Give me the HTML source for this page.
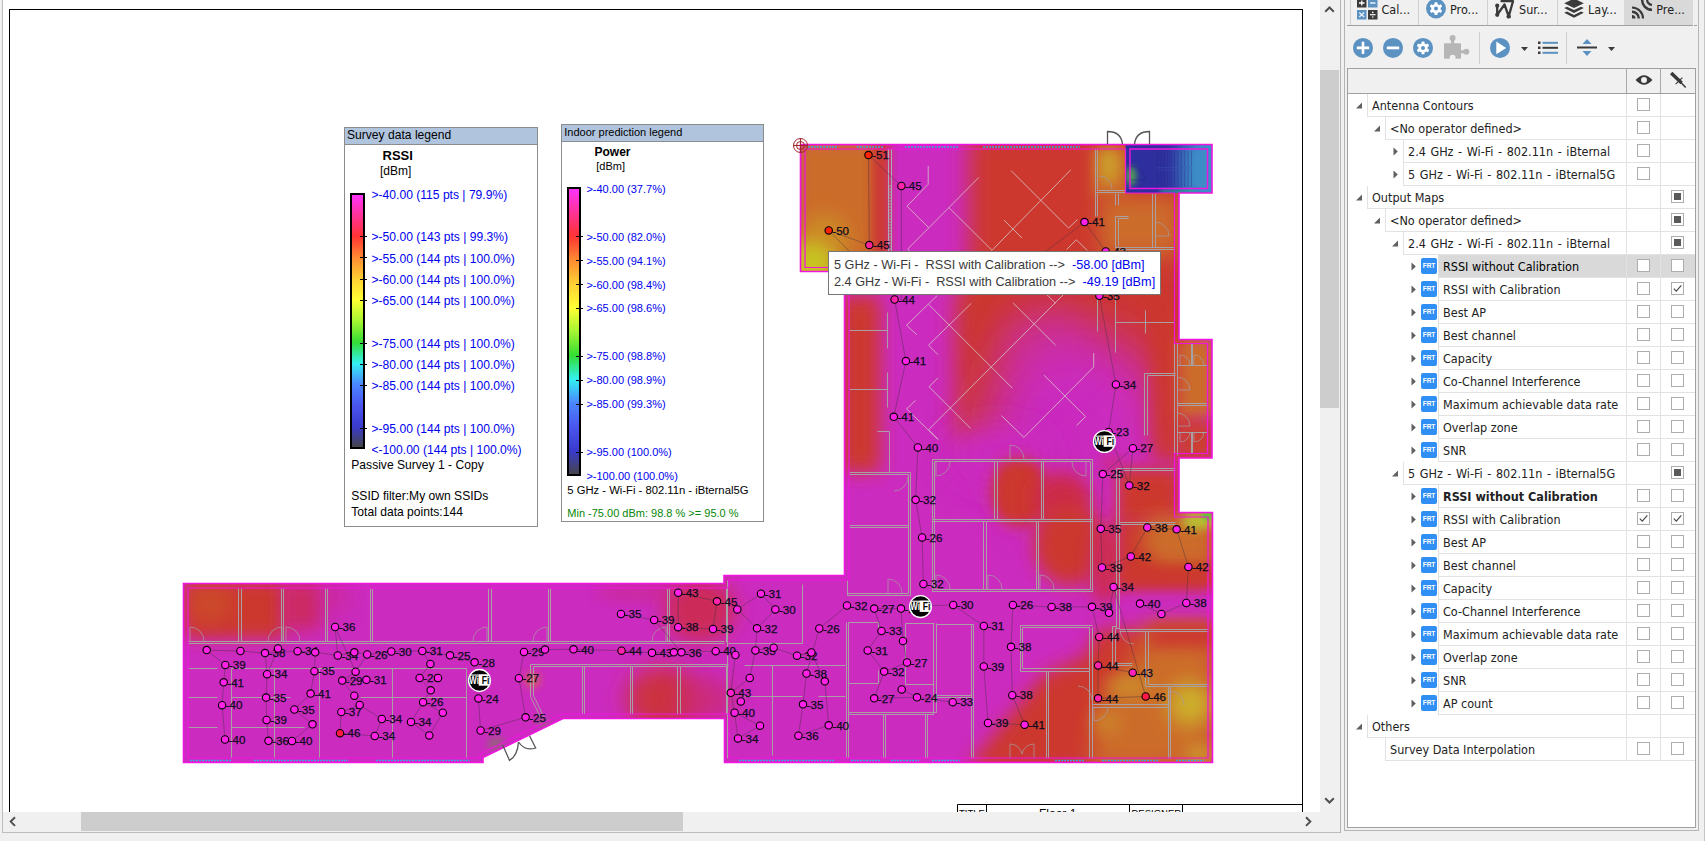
<!DOCTYPE html>
<html lang="en"><head><meta charset="utf-8"><title>Survey map</title>
<style>
html,body{margin:0;padding:0}
body{width:1705px;height:841px;overflow:hidden;background:#f0f0f0;position:relative;font-family:"DejaVu Sans Condensed","Liberation Sans","DejaVu Sans",sans-serif;font-size:12.5px;color:#202020}
.abs{position:absolute}
#canvas{position:absolute;left:3px;top:0;width:1317px;height:812px;background:#fff;overflow:hidden}
.tree{position:absolute;left:1347px;top:68px;width:349px;height:760px;border:1px solid #a0a0a0;box-sizing:border-box;background:#fff;overflow:hidden}
.th{position:absolute;left:0;top:0;width:347px;height:24px;background:#f0f0f0;border-bottom:1px solid #a0a0a0}
.row{position:absolute;left:0;width:347px;height:23px}
.cell{position:absolute;top:0;height:22px;border-left:1px solid #e2e2e2;border-bottom:1px solid #e2e2e2}
.txt{position:absolute;top:1px;line-height:22px;white-space:pre;color:#222}
.cb{position:absolute;top:4px;width:11px;height:11px;border:1px solid #adadad;background:#fff}
.frt{position:absolute;top:3px;width:16px;height:16px;background:#2f8ff5;border-radius:2px;color:#fff;font-family:"Liberation Sans",sans-serif;font-weight:bold;font-size:6.5px;line-height:15px;text-align:center;letter-spacing:0}
.tab{position:absolute;top:0;height:25px;line-height:20px;white-space:pre;color:#222}
</style></head><body>
<div id="canvas"></div>
<div class="abs" style="left:0;top:0;width:1320px;height:812px;overflow:hidden">
<svg id="map" width="1320" height="812" viewBox="0 0 1320 812" style="position:absolute;left:0;top:0">
<defs><linearGradient id="cbar" x1="0" y1="0" x2="0" y2="1">
<stop offset="0" stop-color="#ff33ff"/><stop offset="0.1667" stop-color="#ff3333"/><stop offset="0.25" stop-color="#ff8a33"/>
<stop offset="0.3333" stop-color="#ffcf33"/><stop offset="0.4167" stop-color="#ffff33"/><stop offset="0.5" stop-color="#a6f533"/><stop offset="0.5833" stop-color="#33dd33"/>
<stop offset="0.6667" stop-color="#33f0f0"/><stop offset="0.75" stop-color="#4a86ff"/><stop offset="0.8333" stop-color="#4a55ee"/><stop offset="0.9167" stop-color="#3a3acc"/><stop offset="1" stop-color="#454545"/>
</linearGradient>
<clipPath id="bclip"><polygon points="800.5,144.5 1212,144.5 1212,193 1179,193 1179,339.5 1212,339.5 1212,458 1179,458 1179,512.5 1212.5,512.5 1212.5,762.5 724.5,762.5 724.5,718.5 563,718.5 483,757.5 483,762.5 183.5,762.5 183.5,583.5 724,583.5 724,575.5 844.5,575.5 844.5,271.5 800.5,271.5"/></clipPath>
<filter id="bl2" x="-50%" y="-50%" width="200%" height="200%"><feGaussianBlur stdDeviation="2"/></filter>
<filter id="bl3" x="-50%" y="-50%" width="200%" height="200%"><feGaussianBlur stdDeviation="3"/></filter>
<filter id="bl4" x="-50%" y="-50%" width="200%" height="200%"><feGaussianBlur stdDeviation="4"/></filter>
<filter id="bl5" x="-50%" y="-50%" width="200%" height="200%"><feGaussianBlur stdDeviation="5"/></filter>
<filter id="bl6" x="-50%" y="-50%" width="200%" height="200%"><feGaussianBlur stdDeviation="6"/></filter>
<filter id="bl7" x="-50%" y="-50%" width="200%" height="200%"><feGaussianBlur stdDeviation="7"/></filter>
<filter id="bl8" x="-50%" y="-50%" width="200%" height="200%"><feGaussianBlur stdDeviation="8"/></filter>
<filter id="bl9" x="-50%" y="-50%" width="200%" height="200%"><feGaussianBlur stdDeviation="9"/></filter>
<filter id="bl10" x="-50%" y="-50%" width="200%" height="200%"><feGaussianBlur stdDeviation="10"/></filter>
<filter id="bl11" x="-50%" y="-50%" width="200%" height="200%"><feGaussianBlur stdDeviation="11"/></filter>
<filter id="bl16" x="-50%" y="-50%" width="200%" height="200%"><feGaussianBlur stdDeviation="16"/></filter>
<filter id="bl18" x="-50%" y="-50%" width="200%" height="200%"><feGaussianBlur stdDeviation="18"/></filter>
<filter id="bl26" x="-50%" y="-50%" width="200%" height="200%"><feGaussianBlur stdDeviation="26"/></filter>
<clipPath id="sclip"><rect x="1125.5" y="144.5" width="87" height="48.5"/></clipPath>
</defs>
<rect x="9.5" y="9.5" width="1293" height="830" fill="none" stroke="#000" stroke-width="1"/>
<g font-family="Liberation Sans, sans-serif" fill="#000"><path d="M957.5 812 V804.5 H1302 M986.5 804.5 V812 M1129.5 804.5 V812 M1182.5 804.5 V812" fill="none" stroke="#000"/><text x="959" y="815.5" font-size="9.5">TITLE</text><text x="1039" y="818" font-size="12">Floor 1</text><text x="1131.5" y="815.5" font-size="9.5">DESIGNER</text></g>
<g clip-path="url(#bclip)">
<rect x="180" y="140" width="1040" height="630" fill="#cb2bbf"/>
<rect x="796" y="140" width="86" height="136" fill="#cc6c2a" filter="url(#bl7)" opacity="1"/>
<ellipse cx="824" cy="240" rx="26" ry="26" fill="#cc8a28" filter="url(#bl9)" opacity="1"/>
<ellipse cx="810" cy="264" rx="25" ry="22" fill="#c8c224" filter="url(#bl8)" opacity="1"/>
<rect x="872" y="140" width="17" height="136" fill="#cc382e" filter="url(#bl5)" opacity="0.9"/>
<polygon points="969,130 1190,130 1190,440 955,440 955,300 969,258" fill="#cc382e" filter="url(#bl11)" opacity="1"/>
<rect x="840" y="296" width="40" height="176" fill="#cc382e" filter="url(#bl9)" opacity="1"/>
<ellipse cx="1078" cy="428" rx="92" ry="96" fill="#cb2bbf" filter="url(#bl26)" opacity="1"/>
<ellipse cx="1000" cy="455" rx="50" ry="30" fill="#cb2bbf" filter="url(#bl16)" opacity="0.9"/>
<ellipse cx="1045" cy="345" rx="48" ry="42" fill="#cb2bbf" filter="url(#bl18)" opacity="0.5"/>
<rect x="1152" y="300" width="32" height="160" fill="#cc382e" filter="url(#bl8)" opacity="0.9"/>
<rect x="1100" y="196" width="80" height="60" fill="#cc6c2a" filter="url(#bl10)" opacity="1"/>
<rect x="1092" y="146" width="37" height="50" fill="#cc6c2a" filter="url(#bl6)" opacity="1"/>
<ellipse cx="1109" cy="166" rx="11" ry="18" fill="#cc9a2c" filter="url(#bl6)" opacity="1"/>
<g clip-path="url(#sclip)">
<rect x="1120" y="140" width="100" height="60" fill="#2e2e9e" filter="url(#bl3)" opacity="1"/>
</g>
<g clip-path="url(#sclip)">
<rect x="1180" y="140" width="40" height="60" fill="#3c8cc8" filter="url(#bl9)" opacity="1"/>
</g>
<g clip-path="url(#sclip)">
<rect x="1196" y="140" width="24" height="60" fill="#3c8cc8" filter="url(#bl4)" opacity="1"/>
</g>
<g clip-path="url(#sclip)">
<ellipse cx="1131" cy="176" rx="5" ry="10" fill="#58c83a" filter="url(#bl3)" opacity="0.8"/>
</g>
<g clip-path="url(#sclip)">
<rect x="1160" y="189.5" width="35" height="4" fill="#30b890" filter="url(#bl2)" opacity="0.7"/>
</g>
<rect x="1179" y="338" width="36" height="80" fill="#cc6c2a" filter="url(#bl7)" opacity="1"/>
<rect x="1179" y="420" width="36" height="42" fill="#cc3c30" filter="url(#bl7)" opacity="1"/>
<ellipse cx="1019" cy="492" rx="27" ry="34" fill="#cc382e" filter="url(#bl8)" opacity="1"/>
<rect x="1001" y="468" width="36" height="48" fill="#cc382e" filter="url(#bl6)" opacity="0.9"/>
<ellipse cx="1062" cy="500" rx="30" ry="28" fill="#cc2c48" filter="url(#bl9)" opacity="1"/>
<ellipse cx="1070" cy="545" rx="36" ry="40" fill="#cc382e" filter="url(#bl9)" opacity="1"/>
<ellipse cx="1104" cy="565" rx="16" ry="40" fill="#cc2c58" filter="url(#bl8)" opacity="1"/>
<rect x="1117" y="468" width="64" height="56" fill="#cc382e" filter="url(#bl8)" opacity="1"/>
<polygon points="1100,455 1120,455 1120,470 1100,470" fill="#cc2c6c" filter="url(#bl6)" opacity="0.5"/>
<rect x="1117" y="518" width="98" height="70" fill="#cc382e" filter="url(#bl8)" opacity="1"/>
<polygon points="1150,516 1215,516 1215,566 1160,566 1140,545" fill="#cc6c2a" filter="url(#bl9)" opacity="1"/>
<rect x="1122" y="568" width="95" height="18" fill="#cc382e" filter="url(#bl6)" opacity="0.9"/>
<ellipse cx="1198" cy="521" rx="17" ry="9" fill="#b8c030" filter="url(#bl5)" opacity="1"/>
<ellipse cx="1207" cy="516" rx="5" ry="4" fill="#50d030" filter="url(#bl2)" opacity="1"/>
<polygon points="965,770 1018,706 1044,674 1086,656 1097,630 1215,626 1215,770" fill="#cc382e" filter="url(#bl9)" opacity="1"/>
<polygon points="1088,770 1102,700 1136,655 1150,626 1215,626 1215,770" fill="#cc6c2a" filter="url(#bl11)" opacity="1"/>
<rect x="1150" y="624" width="66" height="24" fill="#cc3a2e" filter="url(#bl7)" opacity="1"/>
<ellipse cx="1190" cy="704" rx="22" ry="22" fill="#ccb02c" filter="url(#bl10)" opacity="1"/>
<ellipse cx="1128" cy="686" rx="22" ry="12" fill="#cc8c2c" filter="url(#bl8)" opacity="0.9"/>
<ellipse cx="1106" cy="722" rx="14" ry="14" fill="#cc8a2c" filter="url(#bl8)" opacity="0.8"/>
<ellipse cx="1200" cy="755" rx="14" ry="10" fill="#cc9a2c" filter="url(#bl8)" opacity="1"/>
<ellipse cx="700" cy="610" rx="36" ry="32" fill="#cc2c58" filter="url(#bl10)" opacity="1"/>
<ellipse cx="640" cy="592" rx="44" ry="9" fill="#cc2c6c" filter="url(#bl7)" opacity="0.4"/>
<ellipse cx="662" cy="699" rx="36" ry="32" fill="#cc3040" filter="url(#bl11)" opacity="1"/>
<ellipse cx="704" cy="700" rx="30" ry="24" fill="#cc2c6c" filter="url(#bl10)" opacity="0.7"/>
<rect x="184" y="580" width="100" height="58" fill="#cc382e" filter="url(#bl8)" opacity="1"/>
<ellipse cx="210" cy="603" rx="22" ry="18" fill="#cc4a2c" filter="url(#bl9)" opacity="1"/>
<rect x="282" y="580" width="38" height="50" fill="#cc2c58" filter="url(#bl9)" opacity="0.9"/>
<rect x="320" y="582" width="30" height="30" fill="#cc2c6c" filter="url(#bl10)" opacity="0.35"/>
<ellipse cx="532.5" cy="680" rx="7" ry="7" fill="#d8782c" filter="url(#bl4)" opacity="0.8"/>
<ellipse cx="496" cy="744" rx="8" ry="6" fill="#6a8a4a" filter="url(#bl4)" opacity="0.7"/>
<ellipse cx="543" cy="723" rx="6" ry="4" fill="#7a8a4a" filter="url(#bl3)" opacity="0.6"/>
<g fill="none" stroke="#a8a0a2" stroke-width="1" opacity="1">
<polyline points="188.5,641.5 724.5,641.5"/>
<polyline points="238.5,588.5 238.5,641.5"/>
<polyline points="241.5,588.5 241.5,641.5"/>
<polyline points="281.5,588.5 281.5,641.5"/>
<polyline points="283.5,588.5 283.5,641.5"/>
<polyline points="325.5,588.5 325.5,641.5"/>
<polyline points="327.5,588.5 327.5,641.5"/>
<polyline points="370.5,588.5 370.5,641.5"/>
<polyline points="372.5,588.5 372.5,641.5"/>
<polyline points="188.5,643.5 724.5,643.5"/>
<polyline points="488.5,588.5 488.5,641.5"/>
<polyline points="491.5,588.5 491.5,641.5"/>
<polyline points="548.5,588.5 548.5,641.5"/>
<polyline points="550.5,588.5 550.5,641.5"/>
<polyline points="667.5,588.5 667.5,641.5"/>
<polyline points="669.5,588.5 669.5,641.5"/>
<polyline points="727.5,580.5 727.5,758.5"/>
<polyline points="231.5,668.5 231.5,758.5"/>
<polyline points="274.5,668.5 274.5,758.5"/>
<polyline points="319.5,668.5 319.5,758.5"/>
<polyline points="392.5,668.5 392.5,758.5"/>
<polyline points="466.5,668.5 466.5,758.5"/>
<polyline points="188.5,668.5 217.5,668.5"/>
<polyline points="231.5,668.5 466.5,668.5"/>
<polyline points="188.5,697.5 217.5,697.5"/>
<polyline points="231.5,697.5 290.5,697.5"/>
<polyline points="188.5,727.5 217.5,727.5"/>
<polyline points="231.5,727.5 304.5,727.5"/>
<polyline points="360.5,697.5 466.5,697.5"/>
<polyline points="530.5,664.5 728.5,664.5"/>
<polyline points="533.5,666.5 728.5,666.5"/>
<polyline points="530.5,664.5 530.5,696.5 541.5,719.5"/>
<polyline points="533.5,666.5 533.5,695.5 543.5,716.5"/>
<polyline points="582.5,666.5 582.5,714.5"/>
<polyline points="584.5,666.5 584.5,714.5"/>
<polyline points="630.5,666.5 630.5,714.5"/>
<polyline points="632.5,666.5 632.5,714.5"/>
<polyline points="677.5,666.5 677.5,714.5"/>
<polyline points="680.5,666.5 680.5,714.5"/>
<polyline points="744.5,665.5 845.5,665.5"/>
<polyline points="772.5,665.5 772.5,755.5"/>
<polyline points="744.5,696.5 802.5,696.5"/>
<polyline points="818.5,696.5 845.5,696.5"/>
<polyline points="728.5,643.5 802.5,643.5 802.5,584.5"/>
<polyline points="726.5,588.5 726.5,642.5"/>
<polyline points="726.5,665.5 726.5,714.5"/>
<polyline points="849.5,472.5 910.5,472.5 910.5,595.5"/>
<polyline points="849.5,474.5 908.5,474.5 908.5,593.5"/>
<polyline points="849.5,525.5 908.5,525.5"/>
<polyline points="849.5,527.5 908.5,527.5"/>
<polyline points="847.5,593.5 908.5,593.5"/>
<polyline points="847.5,595.5 910.5,595.5"/>
<polyline points="847.5,580.5 847.5,595.5"/>
<polyline points="849.5,330.5 887.5,330.5"/>
<polyline points="887.5,312.5 887.5,348.5"/>
<polyline points="849.5,389.5 887.5,389.5"/>
<polyline points="887.5,372.5 887.5,407.5"/>
<polyline points="877.5,431.5 889.5,431.5 889.5,472.5"/>
<polyline points="932.5,459.5 1092.5,459.5 1092.5,591.5 932.5,591.5 932.5,459.5"/>
<polyline points="934.5,461.5 1090.5,461.5 1090.5,589.5 934.5,589.5 934.5,461.5"/>
<polyline points="932.5,519.5 1092.5,519.5"/>
<polyline points="932.5,521.5 1092.5,521.5"/>
<polyline points="994.5,461.5 994.5,519.5"/>
<polyline points="997.5,461.5 997.5,519.5"/>
<polyline points="1041.5,461.5 1041.5,519.5"/>
<polyline points="1043.5,461.5 1043.5,519.5"/>
<polyline points="983.5,521.5 983.5,589.5"/>
<polyline points="986.5,521.5 986.5,589.5"/>
<polyline points="1036.5,521.5 1036.5,589.5"/>
<polyline points="1038.5,521.5 1038.5,589.5"/>
<polyline points="1116.5,468.5 1175.5,468.5"/>
<polyline points="1119.5,470.5 1175.5,470.5"/>
<polyline points="1116.5,468.5 1116.5,628.5"/>
<polyline points="1119.5,470.5 1119.5,628.5"/>
<polyline points="1119.5,522.5 1175.5,522.5"/>
<polyline points="1119.5,524.5 1175.5,524.5"/>
<polyline points="1144.5,373.5 1175.5,373.5"/>
<polyline points="1144.5,373.5 1144.5,435.5"/>
<polyline points="1147.5,375.5 1175.5,375.5"/>
<polyline points="1147.5,375.5 1147.5,435.5"/>
<polyline points="1097.5,295.5 1097.5,331.5"/>
<polyline points="1115.5,295.5 1115.5,352.5"/>
<polyline points="1115.5,322.5 1174.5,322.5"/>
<polyline points="1145.5,310.5 1145.5,333.5"/>
<polyline points="1095.5,149.5 1095.5,216.5"/>
<polyline points="1097.5,149.5 1097.5,190.5"/>
<polyline points="1097.5,193.5 1097.5,216.5"/>
<polyline points="1095.5,192.5 1125.5,192.5"/>
<polyline points="1097.5,190.5 1125.5,190.5"/>
<polyline points="1115.5,193.5 1115.5,205.5"/>
<polyline points="1118.5,193.5 1118.5,205.5"/>
<polyline points="1152.5,193.5 1152.5,247.5"/>
<polyline points="1155.5,193.5 1155.5,247.5"/>
<polyline points="1115.5,247.5 1174.5,247.5"/>
<polyline points="1118.5,249.5 1174.5,249.5"/>
<polyline points="1128.5,216.5 1115.5,216.5 1115.5,248.5"/>
<polyline points="1128.5,218.5 1118.5,218.5 1118.5,246.5"/>
<polyline points="1174.5,343.5 1174.5,455.5"/>
<polyline points="1177.5,343.5 1177.5,455.5"/>
<polyline points="1177.5,365.5 1207.5,365.5"/>
<polyline points="1191.5,343.5 1191.5,365.5"/>
<polyline points="1192.5,343.5 1192.5,365.5"/>
<polyline points="1177.5,403.5 1207.5,403.5"/>
<polyline points="1177.5,405.5 1207.5,405.5"/>
<polyline points="1177.5,432.5 1207.5,432.5"/>
<polyline points="1191.5,432.5 1191.5,453.5"/>
<polyline points="1192.5,432.5 1192.5,453.5"/>
<polyline points="1119.5,629.5 1208.5,629.5"/>
<polyline points="1119.5,631.5 1208.5,631.5"/>
<polyline points="1116.5,626.5 1112.5,626.5 1112.5,665.5 1132.5,665.5"/>
<polyline points="1119.5,628.5 1115.5,628.5 1115.5,663.5 1132.5,663.5"/>
<polyline points="1145.5,631.5 1145.5,686.5 1208.5,686.5"/>
<polyline points="1148.5,631.5 1148.5,684.5 1208.5,684.5"/>
<polyline points="1092.5,704.5 1168.5,704.5"/>
<polyline points="1092.5,707.5 1168.5,707.5"/>
<polyline points="1168.5,686.5 1168.5,758.5"/>
<polyline points="1170.5,686.5 1170.5,758.5"/>
<polyline points="1089.5,627.5 1089.5,758.5"/>
<polyline points="1092.5,627.5 1092.5,758.5"/>
<polyline points="1020.5,625.5 1092.5,625.5"/>
<polyline points="1020.5,625.5 1020.5,671.5 1089.5,671.5"/>
<polyline points="1022.5,627.5 1089.5,627.5"/>
<polyline points="1022.5,627.5 1022.5,668.5 1089.5,668.5"/>
<polyline points="1046.5,671.5 1046.5,758.5"/>
<polyline points="1048.5,671.5 1048.5,758.5"/>
<polyline points="846.5,622.5 846.5,758.5"/>
<polyline points="848.5,622.5 848.5,758.5"/>
<polyline points="848.5,622.5 878.5,622.5 878.5,630.5"/>
<polyline points="878.5,670.5 878.5,683.5 848.5,683.5"/>
<polyline points="905.5,623.5 934.5,623.5"/>
<polyline points="905.5,623.5 905.5,684.5 934.5,684.5"/>
<polyline points="933.5,623.5 933.5,714.5"/>
<polyline points="936.5,623.5 936.5,712.5"/>
<polyline points="848.5,712.5 936.5,712.5"/>
<polyline points="848.5,714.5 933.5,714.5"/>
<polyline points="936.5,624.5 973.5,624.5"/>
<polyline points="971.5,624.5 971.5,758.5"/>
<polyline points="973.5,624.5 973.5,758.5"/>
<polyline points="936.5,695.5 971.5,695.5"/>
<polyline points="936.5,697.5 971.5,697.5"/>
<polyline points="883.5,714.5 883.5,758.5"/>
<polyline points="885.5,714.5 885.5,758.5"/>
<polyline points="925.5,714.5 925.5,758.5"/>
<polyline points="927.5,714.5 927.5,758.5"/>
</g>
<g fill="none" stroke="#d6c6c8" stroke-width="1" opacity="0.8">
<polyline points="928.2,165.9 928.2,184.2 907,206.2 928.6,227.6"/>
<polyline points="978.9,177.4 907.7,249 910,251.5"/>
<polyline points="948.8,207.5 992,250.3"/>
<polyline points="1070.8,169.8 992,250.3"/>
<polyline points="1011,170.5 1068.5,228 1077.6,219.5"/>
<polyline points="1004,220.2 1022,238"/>
<polyline points="1066.5,249.6 1076.3,239.8 1087.4,250.5"/>
<polyline points="937,295.7 906.6,325.2 916.7,334.7"/>
<polyline points="928.5,304.3 1012.5,388.3"/>
<polyline points="971.3,303.3 928.5,345.2 938,354.7"/>
<polyline points="1063.2,294.8 928.5,429.8 938,439.4"/>
<polyline points="938,377.9 929,386.7 970.7,428.5"/>
<polyline points="915.5,400.4 906.6,408.9 938,439.4"/>
<polyline points="1013.2,303 1055.6,345.2"/>
<polyline points="1047,294.8 1055.6,303.3"/>
<polyline points="1093.7,353 1093.7,367 1023.9,437.4 1001.4,415.6"/>
<polyline points="1043.8,375 1085.5,416.5 1076.6,425.5"/>
</g>
<g fill="none" stroke="#b0a8b0"><path d="M888.5 149 V272 M891.5 149 V272"/><path d="M890 185 V265" stroke-dasharray="2 1" stroke="#9aa0a8"/></g>
<g stroke="#26267a" stroke-width="1" opacity="0.35"><path d="M1157.5 151 V187"/><path d="M1160.9 151 V187"/><path d="M1164.3 151 V187"/><path d="M1167.7 151 V187"/><path d="M1171.1 151 V187"/><path d="M1174.5 151 V187"/><path d="M1177.9 151 V187"/><path d="M1181.3 151 V187"/><path d="M1184.7 151 V187"/><path d="M1188.1 151 V187"/><path d="M1191.5 151 V187"/><path d="M1157 167.5 H1192 M1157 170 H1192" stroke="#3a50b0"/></g>
<path d="M1131 180 H1145 A14 14 0 0 0 1131 166" fill="none" stroke="#26267a" stroke-width="1" opacity="0.5"/>
<g fill="none" stroke="#a89aa0" stroke-width="1" opacity="0.75">
<path d="M1180 365 V355 A10 10 0 0 1 1190 365"/>
<path d="M1194 365 V355 A10 10 0 0 1 1204 365"/>
<path d="M1177 377 A13 13 0 0 1 1190 390 H1177"/>
<path d="M1177 413 A13 13 0 0 1 1190 426 H1177"/>
<path d="M1180 432 V442 A10 10 0 0 0 1190 432"/>
<path d="M1194 432 V442 A10 10 0 0 0 1204 432"/>
<path d="M1155 222 A14 14 0 0 1 1169 236 H1155"/>
<path d="M1099 176 A13 13 0 0 1 1112 189"/>
<path d="M936 462 V476 A14 14 0 0 0 950 462"/>
<path d="M1086 462 V476 A14 14 0 0 1 1072 462"/>
<path d="M1010 459 V445 A14 14 0 0 1 1024 459"/>
<path d="M936 589 V575 A14 14 0 0 1 950 589"/>
<path d="M988 589 V575 A14 14 0 0 1 1002 589"/>
<path d="M1040 589 V575 A14 14 0 0 1 1054 589"/>
<path d="M908 477 A14 14 0 0 1 894 491"/>
<path d="M888 593 V579 A14 14 0 0 1 902 593"/>
<path d="M190 641 V627 A14 14 0 0 1 204 641"/>
<path d="M282 641 V627 A14 14 0 0 0 268 641"/>
<path d="M286 641 V627 A14 14 0 0 1 300 641"/>
<path d="M487 641 V627 A14 14 0 0 0 473 641"/>
<path d="M547 641 V627 A14 14 0 0 0 533 641"/>
<path d="M666 641 V627 A14 14 0 0 0 652 641"/>
<path d="M1120 630 A14 14 0 0 0 1134 644"/>
<path d="M1170 705 V691 A14 14 0 0 1 1184 705"/>
<path d="M1094 707 V721 A14 14 0 0 0 1108 707"/>
<path d="M1092 700 A14 14 0 0 0 1078 686"/>
<path d="M1010 758 V744 A12 12 0 0 1 1022 754 A12 12 0 0 1 1034 744 V758"/>
</g>
<polygon points="805,149 1125.5,149 1125.5,193 1174.5,193 1174.5,343.5 1207.5,343.5 1207.5,453.5 1174.5,453.5 1174.5,517 1208,517 1208,758 729,758 729,714 562,714 480,754 480,758 188,758 188,588 728.5,588 728.5,580 849,580 849,267.5 805,267.5" fill="none" stroke="#f214e0" stroke-width="1.2"/>
<polygon points="1130,149 1207.5,149 1207.5,188.5 1130,188.5" fill="none" stroke="#f214e0" stroke-width="1.4"/>
<g stroke="#30b0e8" stroke-width="1.6" stroke-dasharray="2 1" opacity="0.9">
<path d="M808 147 H837"/>
<path d="M857 147 H884"/>
<path d="M905 147 H958"/>
<path d="M983 147 H1080"/>
<path d="M190 760.5 H232"/>
<path d="M254 760.5 H348"/>
<path d="M376 760.5 H470"/>
<path d="M739 760.5 H835"/>
<path d="M851 760.5 H880"/>
<path d="M891 760.5 H919"/>
<path d="M932 760.5 H960"/>
<path d="M1055 760.5 H1084"/>
<path d="M1102 760.5 H1158"/>
<path d="M1176 760.5 H1204"/>
</g>
</g>
<polygon points="800.5,144.5 1212,144.5 1212,193 1179,193 1179,339.5 1212,339.5 1212,458 1179,458 1179,512.5 1212.5,512.5 1212.5,762.5 724.5,762.5 724.5,718.5 563,718.5 483,757.5 483,762.5 183.5,762.5 183.5,583.5 724,583.5 724,575.5 844.5,575.5 844.5,271.5 800.5,271.5" fill="none" stroke="#f214e0" stroke-width="1.6"/>
<g fill="none" stroke="#555" stroke-width="1.3"><path d="M1107.5 144 V131.5 Q1121 131.5 1122.5 144"/><path d="M1149.5 144 V131.5 Q1136 131.5 1134.5 144"/><path d="M502.8 745.2 L509.5 760.4 Q517.5 756 518.5 742"/><path d="M529.5 735.7 L535.7 748 Q525 751.5 518.5 742"/></g>
<g fill="none" stroke="#a02828" stroke-width="1"><circle cx="800.5" cy="145.5" r="7"/><circle cx="800.5" cy="145.5" r="4"/><path d="M793 145.5 H808 M800.5 138 V153"/></g>
<g fill="none" stroke="#403040" stroke-width="0.7" opacity="0.6">
<polyline points="868.5,155.1 869.3,245.1 828.7,230.4 860,262"/>
<polyline points="868.5,155.1 901.4,186 901.4,300"/>
<polyline points="894.6,299.5 905.9,361.1 893.8,416.8 917.9,447.4 915.6,499.8 922.1,537.4 923.4,584"/>
<polyline points="1040,256 1084.5,222.1 1105.7,251.4"/>
<polyline points="1099.4,295.8 1115.9,384.4 1108.6,432 1129.3,485.4 1132.9,448.2 1102.8,474.1 1100.8,528.8 1102,567.5"/>
<polyline points="1102,567.5 1130.8,556.5 1147.3,527.5 1176.6,529.3 1188.4,567 1186.3,603 1161.4,614 1140,603.6"/>
<polyline points="1113.6,587 1109,612.8 1092,606.8 1051.6,607 1012.9,605 1011,646.8 1012.3,695.2 1024.6,724.7 988,723 983.8,666.4 983.8,626 953.2,605 920,606"/>
<polyline points="1113.6,587 1145.7,696.5 1098.1,698.3 1098.1,665.4 1099.2,637 1092,606.8"/>
<polyline points="1098.1,665.4 1132.7,672.7"/>
<polyline points="901,608.6 874.2,608.6 881.5,631 867.7,650.4 884.2,671.6 874.2,698.3 917,697.3 952.7,702.2"/>
<polyline points="901,608.6 903,641 907,662.5 884.2,671.6"/>
<polyline points="901.7,689.4 917,697.3"/>
<polyline points="847,605.5 819.3,628.5 806.5,673.5 803,704.3 798.4,735.7"/>
<polyline points="797,655.7 811.4,652.5 824.8,681.3 828.7,725.3 798.4,735.7"/>
<polyline points="678.2,592.7 717,601.3 713,629 678.2,627.2 678.2,592.7"/>
<polyline points="621,614 654.2,620 681.4,652.3"/>
<polyline points="761,593.7 737.3,609.4 757,628.3 775.3,609.4 761,593.7"/>
<polyline points="757,628.3 755.4,650.4 749.7,678 730.8,692.8 734.6,712.7 738,738.4 760,725.7 734.6,712.7"/>
<polyline points="573.5,649.3 621.5,650.7 652,652.8 681.4,652.3 715.7,651.2 735.4,655 730.8,692.8"/>
<polyline points="755.4,650.4 773.7,647.7 796.4,655.5 811.4,652.5"/>
<polyline points="206.7,650.1 240.4,651 265,653.1 297.6,651.2 315.2,652.3 337.8,655.5"/>
<polyline points="206.7,650.1 225.3,665 223.7,682.3 222.1,705.2 225,739.5"/>
<polyline points="265,653.1 267.1,674.2 266.1,697.6 266.6,720 268.5,740.8"/>
<polyline points="278,648.5 267.1,674.2"/>
<polyline points="268.5,740.8 292,741 312.5,724.3 294.4,709.5 310.6,693.6 314.4,671.2 315.2,652.3"/>
<polyline points="335.1,627 337.8,655.5 354.3,652.3 367.2,654.5 391.3,651.5 422.3,651 450,655.3 474.6,662.3"/>
<polyline points="335.1,627 355.6,671.7 342.2,680.6 354.3,695.7 359.7,705 341.3,712 340,733.2 374.8,736 381.8,719 359.7,705"/>
<polyline points="367.2,654.5 355.6,671.7"/>
<polyline points="366.4,679.8 342.2,680.6"/>
<polyline points="422.3,651 430.4,663.9 419.6,678 430.7,690.3 423.1,702.2 411,721.9 429.3,735.4 442.8,712.7 423.1,702.2"/>
<polyline points="478.4,698.4 480.6,730.5 525.6,717.3 518.9,678.2 524,652 545,649.6 573.5,649.3"/>
</g>
<g font-family="Liberation Sans, sans-serif" font-size="11.6" fill="#0c0a1c" stroke="#0c0a1c" stroke-width="0.25">
<circle cx="868.5" cy="155.1" r="3.7" fill="#ff2200" stroke="#000" stroke-width="1.1"/>
<text x="872.1" y="159.3">-51</text>
<circle cx="901.4" cy="186" r="3.7" fill="#ff22aa" stroke="#000" stroke-width="1.1"/>
<text x="905.0" y="190.2">-45</text>
<circle cx="828.7" cy="230.4" r="3.7" fill="#ff2200" stroke="#000" stroke-width="1.1"/>
<text x="832.3" y="234.6">-50</text>
<circle cx="869.3" cy="245.1" r="3.7" fill="#ff2299" stroke="#000" stroke-width="1.1"/>
<text x="872.9" y="249.3">-45</text>
<circle cx="1084.5" cy="222.1" r="3.7" fill="#ff22e6" stroke="#000" stroke-width="1.1"/>
<text x="1088.1" y="226.3">-41</text>
<circle cx="1105.7" cy="251.4" r="3.7" fill="#ff22e6" stroke="#000" stroke-width="1.1"/>
<text x="1109.3" y="255.6">-43</text>
<circle cx="894.6" cy="299.5" r="3.7" fill="#ff22aa" stroke="#000" stroke-width="1.1"/>
<text x="898.2" y="303.7">-44</text>
<circle cx="1099.4" cy="295.8" r="3.7" fill="#ff22e6" stroke="#000" stroke-width="1.1"/>
<text x="1103.0" y="300.0">-35</text>
<circle cx="905.9" cy="361.1" r="3.7" fill="#ff22e6" stroke="#000" stroke-width="1.1"/>
<text x="909.5" y="365.3">-41</text>
<circle cx="893.8" cy="416.8" r="3.7" fill="#ff22e6" stroke="#000" stroke-width="1.1"/>
<text x="897.4" y="421.0">-41</text>
<circle cx="917.9" cy="447.4" r="3.7" fill="#ff22e6" stroke="#000" stroke-width="1.1"/>
<text x="921.5" y="451.6">-40</text>
<circle cx="1115.9" cy="384.4" r="3.7" fill="#ff22e6" stroke="#000" stroke-width="1.1"/>
<text x="1119.5" y="388.6">-34</text>
<circle cx="1108.6" cy="432" r="3.7" fill="#ff22e6" stroke="#000" stroke-width="1.1"/>
<text x="1112.2" y="436.2">-23</text>
<circle cx="1132.9" cy="448.2" r="3.7" fill="#ff22e6" stroke="#000" stroke-width="1.1"/>
<text x="1136.5" y="452.4">-27</text>
<circle cx="1102.8" cy="474.1" r="3.7" fill="#ff22e6" stroke="#000" stroke-width="1.1"/>
<text x="1106.4" y="478.3">-25</text>
<circle cx="1129.3" cy="485.4" r="3.7" fill="#ff22e6" stroke="#000" stroke-width="1.1"/>
<text x="1132.9" y="489.6">-32</text>
<circle cx="915.6" cy="499.8" r="3.7" fill="#ff22e6" stroke="#000" stroke-width="1.1"/>
<text x="919.2" y="504.0">-32</text>
<circle cx="922.1" cy="537.4" r="3.7" fill="#ff22e6" stroke="#000" stroke-width="1.1"/>
<text x="925.7" y="541.6">-26</text>
<circle cx="1100.8" cy="528.8" r="3.7" fill="#ff22e6" stroke="#000" stroke-width="1.1"/>
<text x="1104.4" y="533.0">-35</text>
<circle cx="1147.3" cy="527.5" r="3.7" fill="#ff22e6" stroke="#000" stroke-width="1.1"/>
<text x="1150.9" y="531.7">-38</text>
<circle cx="1176.6" cy="529.3" r="3.7" fill="#ff22e6" stroke="#000" stroke-width="1.1"/>
<text x="1180.2" y="533.5">-41</text>
<circle cx="923.4" cy="584" r="3.7" fill="#ff22e6" stroke="#000" stroke-width="1.1"/>
<text x="927.0" y="588.2">-32</text>
<circle cx="847" cy="605.5" r="3.7" fill="#ff22e6" stroke="#000" stroke-width="1.1"/>
<text x="850.6" y="609.7">-32</text>
<circle cx="874.2" cy="608.6" r="3.7" fill="#ff22e6" stroke="#000" stroke-width="1.1"/>
<text x="877.8" y="612.8">-27</text>
<circle cx="901" cy="608.6" r="3.7" fill="#ff22e6" stroke="#000" stroke-width="1.1"/>
<text x="904.6" y="612.8">-24</text>
<circle cx="953.2" cy="605" r="3.7" fill="#ff22e6" stroke="#000" stroke-width="1.1"/>
<text x="956.8" y="609.2">-30</text>
<circle cx="1012.9" cy="605" r="3.7" fill="#ff22e6" stroke="#000" stroke-width="1.1"/>
<text x="1016.5" y="609.2">-26</text>
<circle cx="1051.6" cy="607" r="3.7" fill="#ff22e6" stroke="#000" stroke-width="1.1"/>
<text x="1055.2" y="611.2">-38</text>
<circle cx="1092" cy="606.8" r="3.7" fill="#ff22e6" stroke="#000" stroke-width="1.1"/>
<text x="1095.6" y="611.0">-39</text>
<circle cx="1109" cy="612.8" r="3.7" fill="#ff22e6" stroke="#000" stroke-width="1.1"/>
<circle cx="1113.6" cy="587" r="3.7" fill="#ff22e6" stroke="#000" stroke-width="1.1"/>
<text x="1117.2" y="591.2">-34</text>
<circle cx="1102" cy="567.5" r="3.7" fill="#ff22e6" stroke="#000" stroke-width="1.1"/>
<text x="1105.6" y="571.7">-39</text>
<circle cx="1130.8" cy="556.5" r="3.7" fill="#ff22e6" stroke="#000" stroke-width="1.1"/>
<text x="1134.4" y="560.7">-42</text>
<circle cx="1188.4" cy="567" r="3.7" fill="#ff22e6" stroke="#000" stroke-width="1.1"/>
<text x="1192.0" y="571.2">-42</text>
<circle cx="1140" cy="603.6" r="3.7" fill="#ff22e6" stroke="#000" stroke-width="1.1"/>
<text x="1143.6" y="607.8">-40</text>
<circle cx="1161.4" cy="614" r="3.7" fill="#ff22e6" stroke="#000" stroke-width="1.1"/>
<circle cx="1186.3" cy="603" r="3.7" fill="#ff22e6" stroke="#000" stroke-width="1.1"/>
<text x="1189.9" y="607.2">-38</text>
<circle cx="819.3" cy="628.5" r="3.7" fill="#ff22e6" stroke="#000" stroke-width="1.1"/>
<text x="822.9" y="632.7">-26</text>
<circle cx="881.5" cy="631" r="3.7" fill="#ff22e6" stroke="#000" stroke-width="1.1"/>
<text x="885.1" y="635.2">-33</text>
<circle cx="903" cy="641" r="3.7" fill="#ff22e6" stroke="#000" stroke-width="1.1"/>
<circle cx="867.7" cy="650.4" r="3.7" fill="#ff22e6" stroke="#000" stroke-width="1.1"/>
<text x="871.3" y="654.6">-31</text>
<circle cx="907" cy="662.5" r="3.7" fill="#ff22e6" stroke="#000" stroke-width="1.1"/>
<text x="910.6" y="666.7">-27</text>
<circle cx="884.2" cy="671.6" r="3.7" fill="#ff22e6" stroke="#000" stroke-width="1.1"/>
<text x="887.8" y="675.8">-32</text>
<circle cx="901.7" cy="689.4" r="3.7" fill="#ff22e6" stroke="#000" stroke-width="1.1"/>
<circle cx="874.2" cy="698.3" r="3.7" fill="#ff22e6" stroke="#000" stroke-width="1.1"/>
<text x="877.8" y="702.5">-27</text>
<circle cx="917" cy="697.3" r="3.7" fill="#ff22e6" stroke="#000" stroke-width="1.1"/>
<text x="920.6" y="701.5">-24</text>
<circle cx="952.7" cy="702.2" r="3.7" fill="#ff22e6" stroke="#000" stroke-width="1.1"/>
<text x="956.3" y="706.4">-33</text>
<circle cx="983.8" cy="626" r="3.7" fill="#ff22e6" stroke="#000" stroke-width="1.1"/>
<text x="987.4" y="630.2">-31</text>
<circle cx="1011" cy="646.8" r="3.7" fill="#ff22e6" stroke="#000" stroke-width="1.1"/>
<text x="1014.6" y="651.0">-38</text>
<circle cx="983.8" cy="666.4" r="3.7" fill="#ff22e6" stroke="#000" stroke-width="1.1"/>
<text x="987.4" y="670.6">-39</text>
<circle cx="1012.3" cy="695.2" r="3.7" fill="#ff22e6" stroke="#000" stroke-width="1.1"/>
<text x="1015.9" y="699.4">-38</text>
<circle cx="988" cy="723" r="3.7" fill="#ff22e6" stroke="#000" stroke-width="1.1"/>
<text x="991.6" y="727.2">-39</text>
<circle cx="1024.6" cy="724.7" r="3.7" fill="#ff22e6" stroke="#000" stroke-width="1.1"/>
<text x="1028.2" y="728.9">-41</text>
<circle cx="1099.2" cy="637" r="3.7" fill="#ff22aa" stroke="#000" stroke-width="1.1"/>
<text x="1102.8" y="641.2">-44</text>
<circle cx="1098.1" cy="665.4" r="3.7" fill="#ff22aa" stroke="#000" stroke-width="1.1"/>
<text x="1101.7" y="669.6">-44</text>
<circle cx="1132.7" cy="672.7" r="3.7" fill="#ff22bb" stroke="#000" stroke-width="1.1"/>
<text x="1136.3" y="676.9">-43</text>
<circle cx="1098.1" cy="698.3" r="3.7" fill="#ff22aa" stroke="#000" stroke-width="1.1"/>
<text x="1101.7" y="702.5">-44</text>
<circle cx="1145.7" cy="696.5" r="3.7" fill="#ff1a44" stroke="#000" stroke-width="1.1"/>
<text x="1149.3" y="700.7">-46</text>
<circle cx="797" cy="655.7" r="3.7" fill="#ff22e6" stroke="#000" stroke-width="1.1"/>
<text x="800.6" y="659.9">-32</text>
<circle cx="811.4" cy="652.5" r="3.7" fill="#ff22e6" stroke="#000" stroke-width="1.1"/>
<circle cx="806.5" cy="673.5" r="3.7" fill="#ff22e6" stroke="#000" stroke-width="1.1"/>
<text x="810.1" y="677.7">-38</text>
<circle cx="824.8" cy="681.3" r="3.7" fill="#ff22e6" stroke="#000" stroke-width="1.1"/>
<circle cx="803" cy="704.3" r="3.7" fill="#ff22e6" stroke="#000" stroke-width="1.1"/>
<text x="806.6" y="708.5">-35</text>
<circle cx="828.7" cy="725.3" r="3.7" fill="#ff22e6" stroke="#000" stroke-width="1.1"/>
<text x="832.3" y="729.5">-40</text>
<circle cx="798.4" cy="735.7" r="3.7" fill="#ff22e6" stroke="#000" stroke-width="1.1"/>
<text x="802.0" y="739.9">-36</text>
<circle cx="678.2" cy="592.7" r="3.7" fill="#ff22e6" stroke="#000" stroke-width="1.1"/>
<text x="681.8" y="596.9">-43</text>
<circle cx="717" cy="601.3" r="3.7" fill="#ff22aa" stroke="#000" stroke-width="1.1"/>
<text x="720.6" y="605.5">-45</text>
<circle cx="761" cy="593.7" r="3.7" fill="#ff22e6" stroke="#000" stroke-width="1.1"/>
<text x="764.6" y="597.9">-31</text>
<circle cx="737.3" cy="609.4" r="3.7" fill="#ff22e6" stroke="#000" stroke-width="1.1"/>
<circle cx="775.3" cy="609.4" r="3.7" fill="#ff22e6" stroke="#000" stroke-width="1.1"/>
<text x="778.9" y="613.6">-30</text>
<circle cx="621" cy="614" r="3.7" fill="#ff22e6" stroke="#000" stroke-width="1.1"/>
<text x="624.6" y="618.2">-35</text>
<circle cx="654.2" cy="620" r="3.7" fill="#ff22e6" stroke="#000" stroke-width="1.1"/>
<text x="657.8" y="624.2">-39</text>
<circle cx="678.2" cy="627.2" r="3.7" fill="#ff22e6" stroke="#000" stroke-width="1.1"/>
<text x="681.8" y="631.4">-38</text>
<circle cx="713" cy="629" r="3.7" fill="#ff22e6" stroke="#000" stroke-width="1.1"/>
<text x="716.6" y="633.2">-39</text>
<circle cx="757" cy="628.3" r="3.7" fill="#ff22e6" stroke="#000" stroke-width="1.1"/>
<text x="760.6" y="632.5">-32</text>
<circle cx="573.5" cy="649.3" r="3.7" fill="#ff22e6" stroke="#000" stroke-width="1.1"/>
<text x="577.1" y="653.5">-40</text>
<circle cx="621.5" cy="650.7" r="3.7" fill="#ff22aa" stroke="#000" stroke-width="1.1"/>
<text x="625.1" y="654.9">-44</text>
<circle cx="652" cy="652.8" r="3.7" fill="#ff22e6" stroke="#000" stroke-width="1.1"/>
<text x="655.6" y="657.0">-43</text>
<circle cx="673.9" cy="652.3" r="3.7" fill="#ff22e6" stroke="#000" stroke-width="1.1"/>
<circle cx="681.4" cy="652.3" r="3.7" fill="#ff22e6" stroke="#000" stroke-width="1.1"/>
<text x="685.0" y="656.5">-36</text>
<circle cx="715.7" cy="651.2" r="3.7" fill="#ff22e6" stroke="#000" stroke-width="1.1"/>
<text x="719.3" y="655.4">-40</text>
<circle cx="735.4" cy="655" r="3.7" fill="#ff22e6" stroke="#000" stroke-width="1.1"/>
<circle cx="755.4" cy="650.4" r="3.7" fill="#ff22e6" stroke="#000" stroke-width="1.1"/>
<text x="759.0" y="654.6">-35</text>
<circle cx="773.7" cy="647.7" r="3.7" fill="#ff22e6" stroke="#000" stroke-width="1.1"/>
<circle cx="749.7" cy="678" r="3.7" fill="#ff22e6" stroke="#000" stroke-width="1.1"/>
<circle cx="730.8" cy="692.8" r="3.7" fill="#ff22cc" stroke="#000" stroke-width="1.1"/>
<text x="734.4" y="697.0">-43</text>
<circle cx="740.8" cy="701.4" r="3.7" fill="#ff22e6" stroke="#000" stroke-width="1.1"/>
<circle cx="734.6" cy="712.7" r="3.7" fill="#ff22e6" stroke="#000" stroke-width="1.1"/>
<text x="738.2" y="716.9">-40</text>
<circle cx="760" cy="725.7" r="3.7" fill="#ff22e6" stroke="#000" stroke-width="1.1"/>
<circle cx="738" cy="738.4" r="3.7" fill="#ff22e6" stroke="#000" stroke-width="1.1"/>
<text x="741.6" y="742.6">-34</text>
<circle cx="335.1" cy="627" r="3.7" fill="#ff22e6" stroke="#000" stroke-width="1.1"/>
<text x="338.7" y="631.2">-36</text>
<circle cx="206.7" cy="650.1" r="3.7" fill="#ff22e6" stroke="#000" stroke-width="1.1"/>
<circle cx="240.4" cy="651" r="3.7" fill="#ff22e6" stroke="#000" stroke-width="1.1"/>
<circle cx="265" cy="653.1" r="3.7" fill="#ff22e6" stroke="#000" stroke-width="1.1"/>
<text x="268.6" y="657.3">-38</text>
<circle cx="278" cy="648.5" r="3.7" fill="#ff22e6" stroke="#000" stroke-width="1.1"/>
<circle cx="297.6" cy="651.2" r="3.7" fill="#ff22e6" stroke="#000" stroke-width="1.1"/>
<text x="301.2" y="655.4">-34</text>
<circle cx="315.2" cy="652.3" r="3.7" fill="#ff22e6" stroke="#000" stroke-width="1.1"/>
<circle cx="337.8" cy="655.5" r="3.7" fill="#ff22e6" stroke="#000" stroke-width="1.1"/>
<text x="341.4" y="659.7">-34</text>
<circle cx="354.3" cy="652.3" r="3.7" fill="#ff22e6" stroke="#000" stroke-width="1.1"/>
<circle cx="367.2" cy="654.5" r="3.7" fill="#ff22e6" stroke="#000" stroke-width="1.1"/>
<text x="370.8" y="658.7">-26</text>
<circle cx="391.3" cy="651.5" r="3.7" fill="#ff22e6" stroke="#000" stroke-width="1.1"/>
<text x="394.9" y="655.7">-30</text>
<circle cx="422.3" cy="651" r="3.7" fill="#ff22e6" stroke="#000" stroke-width="1.1"/>
<text x="425.9" y="655.2">-31</text>
<circle cx="450" cy="655.3" r="3.7" fill="#ff22e6" stroke="#000" stroke-width="1.1"/>
<text x="453.6" y="659.5">-25</text>
<circle cx="474.6" cy="662.3" r="3.7" fill="#ff22e6" stroke="#000" stroke-width="1.1"/>
<text x="478.2" y="666.5">-28</text>
<circle cx="430.4" cy="663.9" r="3.7" fill="#ff22e6" stroke="#000" stroke-width="1.1"/>
<circle cx="524" cy="652" r="3.7" fill="#ff22e6" stroke="#000" stroke-width="1.1"/>
<text x="527.6" y="656.2">-29</text>
<circle cx="545" cy="649.6" r="3.7" fill="#ff22e6" stroke="#000" stroke-width="1.1"/>
<circle cx="225.3" cy="665" r="3.7" fill="#ff22e6" stroke="#000" stroke-width="1.1"/>
<text x="228.9" y="669.2">-39</text>
<circle cx="267.1" cy="674.2" r="3.7" fill="#ff22e6" stroke="#000" stroke-width="1.1"/>
<text x="270.7" y="678.4">-34</text>
<circle cx="314.4" cy="671.2" r="3.7" fill="#ff22e6" stroke="#000" stroke-width="1.1"/>
<text x="318.0" y="675.4">-35</text>
<circle cx="355.6" cy="671.7" r="3.7" fill="#ff22e6" stroke="#000" stroke-width="1.1"/>
<circle cx="223.7" cy="682.3" r="3.7" fill="#ff22e6" stroke="#000" stroke-width="1.1"/>
<text x="227.3" y="686.5">-41</text>
<circle cx="342.2" cy="680.6" r="3.7" fill="#ff22e6" stroke="#000" stroke-width="1.1"/>
<text x="345.8" y="684.8">-29</text>
<circle cx="366.4" cy="679.8" r="3.7" fill="#ff22e6" stroke="#000" stroke-width="1.1"/>
<text x="370.0" y="684.0">-31</text>
<circle cx="419.6" cy="678" r="3.7" fill="#ff22e6" stroke="#000" stroke-width="1.1"/>
<text x="423.2" y="682.2">-26</text>
<circle cx="438" cy="678" r="3.7" fill="#ff22e6" stroke="#000" stroke-width="1.1"/>
<circle cx="518.9" cy="678.2" r="3.7" fill="#ff22e6" stroke="#000" stroke-width="1.1"/>
<text x="522.5" y="682.4">-27</text>
<circle cx="310.6" cy="693.6" r="3.7" fill="#ff22e6" stroke="#000" stroke-width="1.1"/>
<text x="314.2" y="697.8">-41</text>
<circle cx="354.3" cy="695.7" r="3.7" fill="#ff22e6" stroke="#000" stroke-width="1.1"/>
<circle cx="266.1" cy="697.6" r="3.7" fill="#ff22e6" stroke="#000" stroke-width="1.1"/>
<text x="269.7" y="701.8">-35</text>
<circle cx="430.7" cy="690.3" r="3.7" fill="#ff22e6" stroke="#000" stroke-width="1.1"/>
<circle cx="478.4" cy="698.4" r="3.7" fill="#ff22e6" stroke="#000" stroke-width="1.1"/>
<text x="482.0" y="702.6">-24</text>
<circle cx="423.1" cy="702.2" r="3.7" fill="#ff22e6" stroke="#000" stroke-width="1.1"/>
<text x="426.7" y="706.4">-26</text>
<circle cx="222.1" cy="705.2" r="3.7" fill="#ff22e6" stroke="#000" stroke-width="1.1"/>
<text x="225.7" y="709.4">-40</text>
<circle cx="359.7" cy="705" r="3.7" fill="#ff22e6" stroke="#000" stroke-width="1.1"/>
<circle cx="294.4" cy="709.5" r="3.7" fill="#ff22e6" stroke="#000" stroke-width="1.1"/>
<text x="298.0" y="713.7">-35</text>
<circle cx="341.3" cy="712" r="3.7" fill="#ff22e6" stroke="#000" stroke-width="1.1"/>
<text x="344.9" y="716.2">-37</text>
<circle cx="442.8" cy="712.7" r="3.7" fill="#ff22e6" stroke="#000" stroke-width="1.1"/>
<circle cx="525.6" cy="717.3" r="3.7" fill="#ff22e6" stroke="#000" stroke-width="1.1"/>
<text x="529.2" y="721.5">-25</text>
<circle cx="381.8" cy="719" r="3.7" fill="#ff22e6" stroke="#000" stroke-width="1.1"/>
<text x="385.4" y="723.2">-34</text>
<circle cx="266.6" cy="720" r="3.7" fill="#ff22e6" stroke="#000" stroke-width="1.1"/>
<text x="270.2" y="724.2">-39</text>
<circle cx="411" cy="721.9" r="3.7" fill="#ff22e6" stroke="#000" stroke-width="1.1"/>
<text x="414.6" y="726.1">-34</text>
<circle cx="312.5" cy="724.3" r="3.7" fill="#ff22e6" stroke="#000" stroke-width="1.1"/>
<circle cx="480.6" cy="730.5" r="3.7" fill="#ff22e6" stroke="#000" stroke-width="1.1"/>
<text x="484.2" y="734.7">-29</text>
<circle cx="340" cy="733.2" r="3.7" fill="#ff1a44" stroke="#000" stroke-width="1.1"/>
<text x="343.6" y="737.4">-46</text>
<circle cx="374.8" cy="736" r="3.7" fill="#ff22e6" stroke="#000" stroke-width="1.1"/>
<text x="378.4" y="740.2">-34</text>
<circle cx="429.3" cy="735.4" r="3.7" fill="#ff22e6" stroke="#000" stroke-width="1.1"/>
<circle cx="225" cy="739.5" r="3.7" fill="#ff22e6" stroke="#000" stroke-width="1.1"/>
<text x="228.6" y="743.7">-40</text>
<circle cx="268.5" cy="740.8" r="3.7" fill="#ff22e6" stroke="#000" stroke-width="1.1"/>
<text x="272.1" y="745.0">-36</text>
<circle cx="292" cy="741" r="3.7" fill="#ff22e6" stroke="#000" stroke-width="1.1"/>
<text x="295.6" y="745.2">-40</text>
</g>
<clipPath id="apc0"><circle cx="1104.4" cy="441.5" r="10.4"/></clipPath>
<circle cx="1104.4" cy="441.5" r="10.9" fill="#000" stroke="#fff" stroke-width="1.3"/>
<g clip-path="url(#apc0)"><rect x="1093.4" y="435.6" width="22" height="1.1" fill="#fff"/><rect x="1103.6000000000001" y="435.6" width="12" height="11.2" fill="#fff"/></g>
<text x="1094.2" y="445.0" font-family="Liberation Sans, sans-serif" font-size="10.3" font-weight="bold" fill="#fff" textLength="9.6" lengthAdjust="spacingAndGlyphs">Wi</text>
<text x="1106.6000000000001" y="445.0" font-family="Liberation Sans, sans-serif" font-size="10.3" font-weight="bold" fill="#000" textLength="7.6" lengthAdjust="spacingAndGlyphs">Fi</text>
<clipPath id="apc1"><circle cx="920.5" cy="606.6" r="10.4"/></clipPath>
<circle cx="920.5" cy="606.6" r="10.9" fill="#000" stroke="#fff" stroke-width="1.3"/>
<g clip-path="url(#apc1)"><rect x="909.5" y="600.7" width="22" height="1.1" fill="#fff"/><rect x="919.7" y="600.7" width="12" height="11.2" fill="#fff"/></g>
<text x="910.3" y="610.1" font-family="Liberation Sans, sans-serif" font-size="10.3" font-weight="bold" fill="#fff" textLength="9.6" lengthAdjust="spacingAndGlyphs">Wi</text>
<text x="922.7" y="610.1" font-family="Liberation Sans, sans-serif" font-size="10.3" font-weight="bold" fill="#000" textLength="7.6" lengthAdjust="spacingAndGlyphs">Fi</text>
<clipPath id="apc2"><circle cx="479.5" cy="680.4" r="10.4"/></clipPath>
<circle cx="479.5" cy="680.4" r="10.9" fill="#000" stroke="#fff" stroke-width="1.3"/>
<g clip-path="url(#apc2)"><rect x="468.5" y="674.5" width="22" height="1.1" fill="#fff"/><rect x="478.7" y="674.5" width="12" height="11.2" fill="#fff"/></g>
<text x="469.3" y="683.9" font-family="Liberation Sans, sans-serif" font-size="10.3" font-weight="bold" fill="#fff" textLength="9.6" lengthAdjust="spacingAndGlyphs">Wi</text>
<text x="481.7" y="683.9" font-family="Liberation Sans, sans-serif" font-size="10.3" font-weight="bold" fill="#000" textLength="7.6" lengthAdjust="spacingAndGlyphs">Fi</text>
<g font-family="Liberation Sans, sans-serif">
<rect x="344.5" y="127.5" width="193" height="399" fill="#fff" stroke="#8c8c8c"/>
<rect x="345" y="128" width="192" height="16" fill="#b0c4de"/><rect x="345" y="144" width="192" height="1" fill="#8c8c8c"/>
<text x="347" y="139" font-size="12.1" fill="#000" font-weight="normal" >Survey data legend</text>
<text x="382.5" y="160" font-size="13" fill="#000" font-weight="bold" >RSSI</text>
<text x="380" y="175.2" font-size="12" fill="#000" font-weight="normal" >[dBm]</text>
<rect x="351" y="194" width="13" height="254" fill="url(#cbar)" stroke="#000" stroke-width="2"/>
<text x="371.5" y="198.7" font-size="12.1" fill="#0000f0">&gt;-40.00 (115 pts | 79.9%)</text>
<rect x="360" y="236" width="7" height="1" fill="#000"/>
<text x="371.5" y="241.3" font-size="12.1" fill="#0000f0">&gt;-50.00 (143 pts | 99.3%)</text>
<rect x="360" y="257" width="7" height="1" fill="#000"/>
<text x="371.5" y="262.6" font-size="12.1" fill="#0000f0">&gt;-55.00 (144 pts | 100.0%)</text>
<rect x="360" y="279" width="7" height="1" fill="#000"/>
<text x="371.5" y="283.9" font-size="12.1" fill="#0000f0">&gt;-60.00 (144 pts | 100.0%)</text>
<rect x="360" y="300" width="7" height="1" fill="#000"/>
<text x="371.5" y="305.2" font-size="12.1" fill="#0000f0">&gt;-65.00 (144 pts | 100.0%)</text>
<rect x="360" y="343" width="7" height="1" fill="#000"/>
<text x="371.5" y="347.7" font-size="12.1" fill="#0000f0">&gt;-75.00 (144 pts | 100.0%)</text>
<rect x="360" y="364" width="7" height="1" fill="#000"/>
<text x="371.5" y="369.0" font-size="12.1" fill="#0000f0">&gt;-80.00 (144 pts | 100.0%)</text>
<rect x="360" y="385" width="7" height="1" fill="#000"/>
<text x="371.5" y="390.3" font-size="12.1" fill="#0000f0">&gt;-85.00 (144 pts | 100.0%)</text>
<rect x="360" y="428" width="7" height="1" fill="#000"/>
<text x="371.5" y="432.9" font-size="12.1" fill="#0000f0">&gt;-95.00 (144 pts | 100.0%)</text>
<text x="371.5" y="454.2" font-size="12.1" fill="#0000f0">&lt;-100.00 (144 pts | 100.0%)</text>
<text x="351.3" y="468.7" font-size="12.1" fill="#000" font-weight="normal" >Passive Survey 1 - Copy</text>
<text x="351.3" y="499.6" font-size="12.1" fill="#000" font-weight="normal" >SSID filter:My own SSIDs</text>
<text x="351.3" y="515.5" font-size="12.1" fill="#000" font-weight="normal" >Total data points:144</text>
</g>
<g font-family="Liberation Sans, sans-serif">
<rect x="561.5" y="124.5" width="202" height="397" fill="#fff" stroke="#8c8c8c"/>
<rect x="562" y="125" width="201" height="16" fill="#b0c4de"/><rect x="562" y="141" width="201" height="1" fill="#8c8c8c"/>
<text x="564.3" y="135.8" font-size="11" fill="#000" font-weight="normal" >Indoor prediction legend</text>
<text x="594.5" y="155.6" font-size="12" fill="#000" font-weight="bold" >Power</text>
<text x="596.3" y="170.4" font-size="11" fill="#000" font-weight="normal" >[dBm]</text>
<rect x="568" y="188" width="12" height="287" fill="url(#cbar)" stroke="#000" stroke-width="2"/>
<text x="586.4" y="192.8" font-size="11" fill="#0000f0">&gt;-40.00 (37.7%)</text>
<rect x="576" y="236" width="7" height="1" fill="#000"/>
<text x="586.4" y="240.6" font-size="11" fill="#0000f0">&gt;-50.00 (82.0%)</text>
<rect x="576" y="260" width="7" height="1" fill="#000"/>
<text x="586.4" y="264.6" font-size="11" fill="#0000f0">&gt;-55.00 (94.1%)</text>
<rect x="576" y="284" width="7" height="1" fill="#000"/>
<text x="586.4" y="288.5" font-size="11" fill="#0000f0">&gt;-60.00 (98.4%)</text>
<rect x="576" y="308" width="7" height="1" fill="#000"/>
<text x="586.4" y="312.4" font-size="11" fill="#0000f0">&gt;-65.00 (98.6%)</text>
<rect x="576" y="356" width="7" height="1" fill="#000"/>
<text x="586.4" y="360.2" font-size="11" fill="#0000f0">&gt;-75.00 (98.8%)</text>
<rect x="576" y="380" width="7" height="1" fill="#000"/>
<text x="586.4" y="384.1" font-size="11" fill="#0000f0">&gt;-80.00 (98.9%)</text>
<rect x="576" y="404" width="7" height="1" fill="#000"/>
<text x="586.4" y="408.1" font-size="11" fill="#0000f0">&gt;-85.00 (99.3%)</text>
<rect x="576" y="452" width="7" height="1" fill="#000"/>
<text x="586.4" y="455.9" font-size="11" fill="#0000f0">&gt;-95.00 (100.0%)</text>
<text x="586.4" y="479.8" font-size="11" fill="#0000f0">&gt;-100.00 (100.0%)</text>
<text x="567.3" y="493.7" font-size="11.25" fill="#000" font-weight="normal" >5 GHz - Wi-Fi - 802.11n - iBternal5G</text>
<text x="567.3" y="516.6" font-size="11" fill="#068606" font-weight="normal" >Min -75.00 dBm: 98.8 % &gt;= 95.0 %</text>
</g>
<rect x="828.5" y="251.5" width="332" height="43" fill="#fff" stroke="#767676"/>
<g font-family="Liberation Sans, sans-serif" font-size="12.7" fill="#3a3a3a"><text x="834" y="269.4" xml:space="preserve">5 GHz - Wi-Fi -  RSSI with Calibration --&gt;  <tspan fill="#0000f0">-58.00 [dBm]</tspan></text><text x="834" y="285.6" xml:space="preserve">2.4 GHz - Wi-Fi -  RSSI with Calibration --&gt;  <tspan fill="#0000f0">-49.19 [dBm]</tspan></text></g>
</svg>
</div>
<div class="abs" style="left:2px;top:0;width:1px;height:833px;background:#bdbdbd"></div>
<div class="abs" style="left:2px;top:832px;width:1339px;height:1px;background:#bdbdbd"></div>
<div class="abs" style="left:1340px;top:0;width:1px;height:833px;background:#b4b4b4"></div>
<div class="abs" style="left:1344px;top:0;width:1px;height:831px;background:#b4b4b4"></div>
<div class="abs" style="left:1344px;top:830px;width:355px;height:1px;background:#b4b4b4"></div>
<div class="abs" style="left:1698px;top:0;width:1px;height:831px;background:#b4b4b4"></div>
<div class="abs" style="left:1704px;top:0;width:1px;height:841px;background:#c4c4c4"></div>
<div class="abs" style="left:1320px;top:0;width:20px;height:812px;background:#f0f0f0"></div>
<div class="abs" style="left:3px;top:812px;width:1337px;height:20px;background:#f0f0f0"></div>
<div class="abs" style="left:1320px;top:70px;width:19px;height:338px;background:#cdcdcd"></div>
<div class="abs" style="left:81px;top:812px;width:602px;height:19px;background:#cdcdcd"></div>
<svg class="abs" style="left:0;top:0" width="1345" height="841"><g fill="none" stroke="#505050" stroke-width="2"><path d="M1325.2 11.8 L1329.5 7.5 L1333.8 11.8"/><path d="M1325.2 798.2 L1329.5 802.5 L1333.8 798.2"/><path d="M15 817.3 L10.7 821.6 L15 825.9"/><path d="M1306 817.3 L1310.3 821.6 L1306 825.9"/></g></svg>
<div class="abs" style="left:1624px;top:0;width:69px;height:25px;background:#d9d9d9"></div>
<div class="abs" style="left:1347px;top:25px;width:346px;height:1px;background:#a0a0a0"></div>
<div class="abs" style="left:1694px;top:25px;width:3px;height:1px;background:#a0a0a0"></div>
<div class="abs" style="left:1350px;top:0;width:1px;height:25px;background:#d0d0d0"></div>
<div class="abs" style="left:1418px;top:0;width:1px;height:25px;background:#d0d0d0"></div>
<div class="abs" style="left:1487px;top:0;width:1px;height:25px;background:#d0d0d0"></div>
<div class="abs" style="left:1557px;top:0;width:1px;height:25px;background:#d0d0d0"></div>
<div class="tab" style="left:1381.5px">Cal...</div>
<div class="tab" style="left:1450px">Pro...</div>
<div class="tab" style="left:1519px">Sur...</div>
<div class="tab" style="left:1588px">Lay...</div>
<div class="tab" style="left:1656.3px">Pre...</div>
<svg class="abs" style="left:1345px;top:0" width="355" height="68">
<defs><g id="gear"><circle r="4.7" fill="#fff"/><g fill="#fff"><rect x="-1.5" y="-6.4" width="3" height="12.8" rx="0.6"/><rect x="-1.5" y="-6.4" width="3" height="12.8" rx="0.6" transform="rotate(60)"/><rect x="-1.5" y="-6.4" width="3" height="12.8" rx="0.6" transform="rotate(120)"/></g><circle r="2" fill="#5b92c2"/></g></defs>
<!-- tab icons -->
<g>
<rect x="12" y="-2" width="9.5" height="9.5" fill="#3a3a3a"/><rect x="23" y="-2" width="9.5" height="9.5" fill="#5b92c2"/>
<rect x="12" y="10" width="9.5" height="9.5" fill="#5b92c2"/><rect x="23" y="10" width="9.5" height="9.5" fill="#3a3a3a"/>
<path d="M14 3 H19.5 M16.75 0.5 V5.5" stroke="#fff" stroke-width="1.3"/><path d="M25 3 H30.5" stroke="#fff" stroke-width="1.3"/>
<path d="M14.3 12.5 L19.2 17 M19.2 12.5 L14.3 17" stroke="#e8f0f8" stroke-width="1.3"/><path d="M25 14.7 H30.5" stroke="#fff" stroke-width="1.2"/><circle cx="27.75" cy="12.4" r="0.8" fill="#fff"/><circle cx="27.75" cy="17" r="0.8" fill="#fff"/>
</g>
<circle cx="91" cy="8.6" r="9.9" fill="#5b92c2"/><use href="#gear" x="91" y="8.6"/>
<g fill="none" stroke="#3a3a3a" stroke-width="2.3" stroke-linejoin="round" stroke-linecap="round">
<path d="M152.2 5.7 L152.2 14.8 L159.5 4.5 L163.7 16.4 L168 1.2 L156.5 1.2"/>
</g>
<circle cx="152.2" cy="5.7" r="2.1" fill="#3a3a3a"/><circle cx="152.2" cy="14.8" r="2.1" fill="#3a3a3a"/><circle cx="163.7" cy="16.4" r="2.2" fill="#3a3a3a"/>
<g fill="#3a3a3a">
<path d="M229 -1.5 L238.8 3.3 L229 8 L219.2 3.3 Z"/>
<path d="M219.2 8 L222 6.7 L229 10.1 L236 6.7 L238.8 8 L229 12.9 Z"/>
<path d="M219.2 12.8 L222 11.5 L229 14.9 L236 11.5 L238.8 12.8 L229 17.8 Z"/>
</g>
<g fill="none" stroke="#3a3a3a">
<path d="M287 18.5 V15 A3.5 3.5 0 0 1 290.5 18.5 Z" fill="#3a3a3a" stroke="none"/>
<path d="M287 11.7 A6.8 6.8 0 0 1 293.8 18.5" stroke-width="2.4"/><path d="M287 7.5 A11 11 0 0 1 298 18.5" stroke-width="2.2"/>
<path d="M302.3 -1 A4.8 4.8 0 0 0 307 4.8" stroke-width="2.2"/><path d="M297.2 -1 A9.8 9.8 0 0 0 307 9.8" stroke-width="2.4"/>
</g>
<!-- toolbar -->
<g>
<circle cx="18" cy="47.9" r="10" fill="#5b92c2"/><path d="M11.8 47.9 H24.2 M18 41.7 V54.1" stroke="#fff" stroke-width="2.6"/>
<circle cx="48" cy="47.9" r="10" fill="#5b92c2"/><path d="M41.8 47.9 H54.2" stroke="#fff" stroke-width="2.8"/>
<circle cx="78" cy="47.9" r="10" fill="#5b92c2"/><use href="#gear" x="78" y="47.9"/>
<g fill="#b6b6b6"><rect x="99" y="43.2" width="17" height="15.5" rx="0.8"/><circle cx="107.6" cy="38" r="3"/><rect x="106.1" y="39" width="3" height="5"/><circle cx="121.3" cy="51.8" r="3"/><rect x="115" y="50.3" width="5" height="3"/></g><circle cx="107.6" cy="57.8" r="3" fill="#f0f0f0"/><rect x="106" y="57" width="3.2" height="3" fill="#f0f0f0"/>
<rect x="134" y="32" width="1" height="32" fill="#cfcfcf"/>
<circle cx="155" cy="47.9" r="10" fill="#5b92c2"/><path d="M151.3 41.5 L161.2 47.9 L151.3 54.3 Z" fill="#fff"/>
<path d="M176 47 L183 47 L179.5 51 Z" fill="#3a3a3a"/>
<g fill="#3a3a3a"><rect x="193" y="41.5" width="2.5" height="2.5"/><rect x="193" y="46.5" width="2.5" height="2.5"/><rect x="193" y="51.5" width="2.5" height="2.5"/></g>
<g fill="#3a3a3a"><rect x="197.5" y="46.8" width="15.5" height="2"/></g><g fill="#5b92c2"><rect x="197.5" y="41.8" width="15.5" height="2"/><rect x="197.5" y="51.8" width="15.5" height="2"/></g>
<rect x="221" y="32" width="1" height="32" fill="#cfcfcf"/>
<rect x="232" y="46.5" width="20" height="2" fill="#3a3a3a"/><path d="M237.5 44 L242 39 L246.5 44 Z" fill="#5b92c2"/><path d="M237.5 51 L242 56 L246.5 51 Z" fill="#5b92c2"/>
<path d="M263 47 L270 47 L266.5 51 Z" fill="#3a3a3a"/>
</g>
</svg>
<div class="tree">
<div class="th"><div class="abs" style="left:278px;top:0;width:1px;height:24px;background:#a8a8a8"></div><div class="abs" style="left:312px;top:0;width:1px;height:24px;background:#a8a8a8"></div><svg class="abs" style="left:279px;top:0" width="68" height="24"><path d="M8.6 11 Q17 1.6 25.4 11 Q17 20.4 8.6 11 Z" fill="#383838"/><circle cx="17" cy="11" r="3" fill="#f0f0f0"/><path d="M44.2 4 L54.6 14" stroke="#383838" stroke-width="3.4" stroke-linecap="butt"/><path d="M48.6 15.2 L55.4 8.6" stroke="#383838" stroke-width="1.1"/><path d="M53.5 13 L58.7 18.4" stroke="#383838" stroke-width="1.5"/></svg></div>
<div class="row" style="top:25px">
<div class="cell" style="left:19px;width:258px;"></div>
<div class="cell" style="left:278px;width:33px;border-left-color:#e2e2e2;"></div>
<div class="cell" style="left:312px;width:34px;"></div>
<svg class="abs" style="left:8px;top:8px" width="7" height="7"><path d="M6 0.5 L6 6.5 L0 6.5 Z" fill="#606060"/></svg>
<div class="txt" style="left:24px;">Antenna Contours</div>
<div class="cb" style="left:289px"></div>
</div>
<div class="row" style="top:48px">
<div class="cell" style="left:37px;width:240px;"></div>
<div class="cell" style="left:278px;width:33px;border-left-color:#e2e2e2;"></div>
<div class="cell" style="left:312px;width:34px;"></div>
<svg class="abs" style="left:26px;top:8px" width="7" height="7"><path d="M6 0.5 L6 6.5 L0 6.5 Z" fill="#606060"/></svg>
<div class="txt" style="left:42px;">&lt;No operator defined&gt;</div>
<div class="cb" style="left:289px"></div>
</div>
<div class="row" style="top:71px">
<div class="cell" style="left:55px;width:222px;"></div>
<div class="cell" style="left:278px;width:33px;border-left-color:#e2e2e2;"></div>
<div class="cell" style="left:312px;width:34px;"></div>
<svg class="abs" style="left:45px;top:7px" width="6" height="9"><path d="M0.5 0.5 L4.8 4.5 L0.5 8.5 Z" fill="#606060"/></svg>
<div class="txt" style="left:60px;word-spacing:1px;">2.4 GHz - Wi-Fi - 802.11n - iBternal</div>
<div class="cb" style="left:289px"></div>
</div>
<div class="row" style="top:94px">
<div class="cell" style="left:55px;width:222px;"></div>
<div class="cell" style="left:278px;width:33px;border-left-color:#e2e2e2;"></div>
<div class="cell" style="left:312px;width:34px;"></div>
<svg class="abs" style="left:45px;top:7px" width="6" height="9"><path d="M0.5 0.5 L4.8 4.5 L0.5 8.5 Z" fill="#606060"/></svg>
<div class="txt" style="left:60px;word-spacing:1px;">5 GHz - Wi-Fi - 802.11n - iBternal5G</div>
<div class="cb" style="left:289px"></div>
</div>
<div class="row" style="top:117px">
<div class="cell" style="left:19px;width:258px;"></div>
<div class="cell" style="left:278px;width:33px;border-left-color:#e2e2e2;"></div>
<div class="cell" style="left:312px;width:34px;"></div>
<svg class="abs" style="left:8px;top:8px" width="7" height="7"><path d="M6 0.5 L6 6.5 L0 6.5 Z" fill="#606060"/></svg>
<div class="txt" style="left:24px;">Output Maps</div>
<div class="cb" style="left:323px"><div style="position:absolute;left:2px;top:2px;width:7px;height:7px;background:#5a5a5a"></div></div>
</div>
<div class="row" style="top:140px">
<div class="cell" style="left:37px;width:240px;"></div>
<div class="cell" style="left:278px;width:33px;border-left-color:#e2e2e2;"></div>
<div class="cell" style="left:312px;width:34px;"></div>
<svg class="abs" style="left:26px;top:8px" width="7" height="7"><path d="M6 0.5 L6 6.5 L0 6.5 Z" fill="#606060"/></svg>
<div class="txt" style="left:42px;">&lt;No operator defined&gt;</div>
<div class="cb" style="left:323px"><div style="position:absolute;left:2px;top:2px;width:7px;height:7px;background:#5a5a5a"></div></div>
</div>
<div class="row" style="top:163px">
<div class="cell" style="left:55px;width:222px;"></div>
<div class="cell" style="left:278px;width:33px;border-left-color:#e2e2e2;"></div>
<div class="cell" style="left:312px;width:34px;"></div>
<svg class="abs" style="left:44px;top:8px" width="7" height="7"><path d="M6 0.5 L6 6.5 L0 6.5 Z" fill="#606060"/></svg>
<div class="txt" style="left:60px;word-spacing:1px;">2.4 GHz - Wi-Fi - 802.11n - iBternal</div>
<div class="cb" style="left:323px"><div style="position:absolute;left:2px;top:2px;width:7px;height:7px;background:#5a5a5a"></div></div>
</div>
<div class="row" style="top:186px">
<div class="cell" style="left:90px;width:187px;background:#d9d9d9;"></div>
<div class="cell" style="left:278px;width:33px;border-left-color:#e2e2e2;background:#d9d9d9;"></div>
<div class="cell" style="left:312px;width:34px;background:#d9d9d9;"></div>
<svg class="abs" style="left:63px;top:7px" width="6" height="9"><path d="M0.5 0.5 L4.8 4.5 L0.5 8.5 Z" fill="#606060"/></svg>
<div class="frt" style="left:73px">FRT</div>
<div class="txt" style="left:95px;color:#000;">RSSI without Calibration</div>
<div class="cb" style="left:289px"></div>
<div class="cb" style="left:323px"></div>
</div>
<div class="row" style="top:209px">
<div class="cell" style="left:90px;width:187px;"></div>
<div class="cell" style="left:278px;width:33px;border-left-color:#e2e2e2;"></div>
<div class="cell" style="left:312px;width:34px;"></div>
<svg class="abs" style="left:63px;top:7px" width="6" height="9"><path d="M0.5 0.5 L4.8 4.5 L0.5 8.5 Z" fill="#606060"/></svg>
<div class="frt" style="left:73px">FRT</div>
<div class="txt" style="left:95px;">RSSI with Calibration</div>
<div class="cb" style="left:289px"></div>
<div class="cb" style="left:323px"><svg width="11" height="11" style="position:absolute;left:0;top:0"><path d="M1.8 5.6 L4.3 8.2 L9.3 2.4" fill="none" stroke="#4a4a4a" stroke-width="1.2"/></svg></div>
</div>
<div class="row" style="top:232px">
<div class="cell" style="left:90px;width:187px;"></div>
<div class="cell" style="left:278px;width:33px;border-left-color:#e2e2e2;"></div>
<div class="cell" style="left:312px;width:34px;"></div>
<svg class="abs" style="left:63px;top:7px" width="6" height="9"><path d="M0.5 0.5 L4.8 4.5 L0.5 8.5 Z" fill="#606060"/></svg>
<div class="frt" style="left:73px">FRT</div>
<div class="txt" style="left:95px;">Best AP</div>
<div class="cb" style="left:289px"></div>
<div class="cb" style="left:323px"></div>
</div>
<div class="row" style="top:255px">
<div class="cell" style="left:90px;width:187px;"></div>
<div class="cell" style="left:278px;width:33px;border-left-color:#e2e2e2;"></div>
<div class="cell" style="left:312px;width:34px;"></div>
<svg class="abs" style="left:63px;top:7px" width="6" height="9"><path d="M0.5 0.5 L4.8 4.5 L0.5 8.5 Z" fill="#606060"/></svg>
<div class="frt" style="left:73px">FRT</div>
<div class="txt" style="left:95px;">Best channel</div>
<div class="cb" style="left:289px"></div>
<div class="cb" style="left:323px"></div>
</div>
<div class="row" style="top:278px">
<div class="cell" style="left:90px;width:187px;"></div>
<div class="cell" style="left:278px;width:33px;border-left-color:#e2e2e2;"></div>
<div class="cell" style="left:312px;width:34px;"></div>
<svg class="abs" style="left:63px;top:7px" width="6" height="9"><path d="M0.5 0.5 L4.8 4.5 L0.5 8.5 Z" fill="#606060"/></svg>
<div class="frt" style="left:73px">FRT</div>
<div class="txt" style="left:95px;">Capacity</div>
<div class="cb" style="left:289px"></div>
<div class="cb" style="left:323px"></div>
</div>
<div class="row" style="top:301px">
<div class="cell" style="left:90px;width:187px;"></div>
<div class="cell" style="left:278px;width:33px;border-left-color:#e2e2e2;"></div>
<div class="cell" style="left:312px;width:34px;"></div>
<svg class="abs" style="left:63px;top:7px" width="6" height="9"><path d="M0.5 0.5 L4.8 4.5 L0.5 8.5 Z" fill="#606060"/></svg>
<div class="frt" style="left:73px">FRT</div>
<div class="txt" style="left:95px;">Co-Channel Interference</div>
<div class="cb" style="left:289px"></div>
<div class="cb" style="left:323px"></div>
</div>
<div class="row" style="top:324px">
<div class="cell" style="left:90px;width:187px;"></div>
<div class="cell" style="left:278px;width:33px;border-left-color:#e2e2e2;"></div>
<div class="cell" style="left:312px;width:34px;"></div>
<svg class="abs" style="left:63px;top:7px" width="6" height="9"><path d="M0.5 0.5 L4.8 4.5 L0.5 8.5 Z" fill="#606060"/></svg>
<div class="frt" style="left:73px">FRT</div>
<div class="txt" style="left:95px;">Maximum achievable data rate</div>
<div class="cb" style="left:289px"></div>
<div class="cb" style="left:323px"></div>
</div>
<div class="row" style="top:347px">
<div class="cell" style="left:90px;width:187px;"></div>
<div class="cell" style="left:278px;width:33px;border-left-color:#e2e2e2;"></div>
<div class="cell" style="left:312px;width:34px;"></div>
<svg class="abs" style="left:63px;top:7px" width="6" height="9"><path d="M0.5 0.5 L4.8 4.5 L0.5 8.5 Z" fill="#606060"/></svg>
<div class="frt" style="left:73px">FRT</div>
<div class="txt" style="left:95px;">Overlap zone</div>
<div class="cb" style="left:289px"></div>
<div class="cb" style="left:323px"></div>
</div>
<div class="row" style="top:370px">
<div class="cell" style="left:90px;width:187px;"></div>
<div class="cell" style="left:278px;width:33px;border-left-color:#e2e2e2;"></div>
<div class="cell" style="left:312px;width:34px;"></div>
<svg class="abs" style="left:63px;top:7px" width="6" height="9"><path d="M0.5 0.5 L4.8 4.5 L0.5 8.5 Z" fill="#606060"/></svg>
<div class="frt" style="left:73px">FRT</div>
<div class="txt" style="left:95px;">SNR</div>
<div class="cb" style="left:289px"></div>
<div class="cb" style="left:323px"></div>
</div>
<div class="row" style="top:393px">
<div class="cell" style="left:55px;width:222px;"></div>
<div class="cell" style="left:278px;width:33px;border-left-color:#e2e2e2;"></div>
<div class="cell" style="left:312px;width:34px;"></div>
<svg class="abs" style="left:44px;top:8px" width="7" height="7"><path d="M6 0.5 L6 6.5 L0 6.5 Z" fill="#606060"/></svg>
<div class="txt" style="left:60px;word-spacing:1px;">5 GHz - Wi-Fi - 802.11n - iBternal5G</div>
<div class="cb" style="left:323px"><div style="position:absolute;left:2px;top:2px;width:7px;height:7px;background:#5a5a5a"></div></div>
</div>
<div class="row" style="top:416px">
<div class="cell" style="left:90px;width:187px;"></div>
<div class="cell" style="left:278px;width:33px;border-left-color:#e2e2e2;"></div>
<div class="cell" style="left:312px;width:34px;"></div>
<svg class="abs" style="left:63px;top:7px" width="6" height="9"><path d="M0.5 0.5 L4.8 4.5 L0.5 8.5 Z" fill="#606060"/></svg>
<div class="frt" style="left:73px">FRT</div>
<div class="txt" style="left:95px;font-weight:bold;">RSSI without Calibration</div>
<div class="cb" style="left:289px"></div>
<div class="cb" style="left:323px"></div>
</div>
<div class="row" style="top:439px">
<div class="cell" style="left:90px;width:187px;"></div>
<div class="cell" style="left:278px;width:33px;border-left-color:#e2e2e2;"></div>
<div class="cell" style="left:312px;width:34px;"></div>
<svg class="abs" style="left:63px;top:7px" width="6" height="9"><path d="M0.5 0.5 L4.8 4.5 L0.5 8.5 Z" fill="#606060"/></svg>
<div class="frt" style="left:73px">FRT</div>
<div class="txt" style="left:95px;">RSSI with Calibration</div>
<div class="cb" style="left:289px"><svg width="11" height="11" style="position:absolute;left:0;top:0"><path d="M1.8 5.6 L4.3 8.2 L9.3 2.4" fill="none" stroke="#4a4a4a" stroke-width="1.2"/></svg></div>
<div class="cb" style="left:323px"><svg width="11" height="11" style="position:absolute;left:0;top:0"><path d="M1.8 5.6 L4.3 8.2 L9.3 2.4" fill="none" stroke="#4a4a4a" stroke-width="1.2"/></svg></div>
</div>
<div class="row" style="top:462px">
<div class="cell" style="left:90px;width:187px;"></div>
<div class="cell" style="left:278px;width:33px;border-left-color:#e2e2e2;"></div>
<div class="cell" style="left:312px;width:34px;"></div>
<svg class="abs" style="left:63px;top:7px" width="6" height="9"><path d="M0.5 0.5 L4.8 4.5 L0.5 8.5 Z" fill="#606060"/></svg>
<div class="frt" style="left:73px">FRT</div>
<div class="txt" style="left:95px;">Best AP</div>
<div class="cb" style="left:289px"></div>
<div class="cb" style="left:323px"></div>
</div>
<div class="row" style="top:485px">
<div class="cell" style="left:90px;width:187px;"></div>
<div class="cell" style="left:278px;width:33px;border-left-color:#e2e2e2;"></div>
<div class="cell" style="left:312px;width:34px;"></div>
<svg class="abs" style="left:63px;top:7px" width="6" height="9"><path d="M0.5 0.5 L4.8 4.5 L0.5 8.5 Z" fill="#606060"/></svg>
<div class="frt" style="left:73px">FRT</div>
<div class="txt" style="left:95px;">Best channel</div>
<div class="cb" style="left:289px"></div>
<div class="cb" style="left:323px"></div>
</div>
<div class="row" style="top:508px">
<div class="cell" style="left:90px;width:187px;"></div>
<div class="cell" style="left:278px;width:33px;border-left-color:#e2e2e2;"></div>
<div class="cell" style="left:312px;width:34px;"></div>
<svg class="abs" style="left:63px;top:7px" width="6" height="9"><path d="M0.5 0.5 L4.8 4.5 L0.5 8.5 Z" fill="#606060"/></svg>
<div class="frt" style="left:73px">FRT</div>
<div class="txt" style="left:95px;">Capacity</div>
<div class="cb" style="left:289px"></div>
<div class="cb" style="left:323px"></div>
</div>
<div class="row" style="top:531px">
<div class="cell" style="left:90px;width:187px;"></div>
<div class="cell" style="left:278px;width:33px;border-left-color:#e2e2e2;"></div>
<div class="cell" style="left:312px;width:34px;"></div>
<svg class="abs" style="left:63px;top:7px" width="6" height="9"><path d="M0.5 0.5 L4.8 4.5 L0.5 8.5 Z" fill="#606060"/></svg>
<div class="frt" style="left:73px">FRT</div>
<div class="txt" style="left:95px;">Co-Channel Interference</div>
<div class="cb" style="left:289px"></div>
<div class="cb" style="left:323px"></div>
</div>
<div class="row" style="top:554px">
<div class="cell" style="left:90px;width:187px;"></div>
<div class="cell" style="left:278px;width:33px;border-left-color:#e2e2e2;"></div>
<div class="cell" style="left:312px;width:34px;"></div>
<svg class="abs" style="left:63px;top:7px" width="6" height="9"><path d="M0.5 0.5 L4.8 4.5 L0.5 8.5 Z" fill="#606060"/></svg>
<div class="frt" style="left:73px">FRT</div>
<div class="txt" style="left:95px;">Maximum achievable data rate</div>
<div class="cb" style="left:289px"></div>
<div class="cb" style="left:323px"></div>
</div>
<div class="row" style="top:577px">
<div class="cell" style="left:90px;width:187px;"></div>
<div class="cell" style="left:278px;width:33px;border-left-color:#e2e2e2;"></div>
<div class="cell" style="left:312px;width:34px;"></div>
<svg class="abs" style="left:63px;top:7px" width="6" height="9"><path d="M0.5 0.5 L4.8 4.5 L0.5 8.5 Z" fill="#606060"/></svg>
<div class="frt" style="left:73px">FRT</div>
<div class="txt" style="left:95px;">Overlap zone</div>
<div class="cb" style="left:289px"></div>
<div class="cb" style="left:323px"></div>
</div>
<div class="row" style="top:600px">
<div class="cell" style="left:90px;width:187px;"></div>
<div class="cell" style="left:278px;width:33px;border-left-color:#e2e2e2;"></div>
<div class="cell" style="left:312px;width:34px;"></div>
<svg class="abs" style="left:63px;top:7px" width="6" height="9"><path d="M0.5 0.5 L4.8 4.5 L0.5 8.5 Z" fill="#606060"/></svg>
<div class="frt" style="left:73px">FRT</div>
<div class="txt" style="left:95px;">SNR</div>
<div class="cb" style="left:289px"></div>
<div class="cb" style="left:323px"></div>
</div>
<div class="row" style="top:623px">
<div class="cell" style="left:90px;width:187px;"></div>
<div class="cell" style="left:278px;width:33px;border-left-color:#e2e2e2;"></div>
<div class="cell" style="left:312px;width:34px;"></div>
<svg class="abs" style="left:63px;top:7px" width="6" height="9"><path d="M0.5 0.5 L4.8 4.5 L0.5 8.5 Z" fill="#606060"/></svg>
<div class="frt" style="left:73px">FRT</div>
<div class="txt" style="left:95px;">AP count</div>
<div class="cb" style="left:289px"></div>
<div class="cb" style="left:323px"></div>
</div>
<div class="row" style="top:646px">
<div class="cell" style="left:19px;width:258px;"></div>
<div class="cell" style="left:278px;width:33px;border-left-color:#e2e2e2;"></div>
<div class="cell" style="left:312px;width:34px;"></div>
<svg class="abs" style="left:8px;top:8px" width="7" height="7"><path d="M6 0.5 L6 6.5 L0 6.5 Z" fill="#606060"/></svg>
<div class="txt" style="left:24px;">Others</div>
</div>
<div class="row" style="top:669px">
<div class="cell" style="left:37px;width:240px;"></div>
<div class="cell" style="left:278px;width:33px;border-left-color:#e2e2e2;"></div>
<div class="cell" style="left:312px;width:34px;"></div>
<div class="txt" style="left:42px;">Survey Data Interpolation</div>
<div class="cb" style="left:289px"></div>
<div class="cb" style="left:323px"></div>
</div>
</div>
</body></html>
